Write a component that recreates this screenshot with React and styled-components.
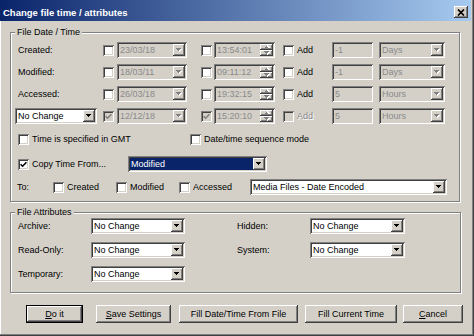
import React from 'react';
import styled, { createGlobalStyle, css } from 'styled-components';

const face = '#d4d0c8';
const shadow = '#808080';
const dark = '#404040';
const light = '#ffffff';
const greyText = '#8a8a8a';

const GlobalStyle = createGlobalStyle`
  html, body { margin: 0; padding: 0; background: ${face}; }
  body {
    font-family: "Liberation Sans", Arial, sans-serif;
    font-size: 9px;
    line-height: 11px;
    color: #000;
  }
  #root { width: 474px; height: 336px; }
`;

const raised = css`
  box-shadow: inset -1px -1px 0 ${dark}, inset 1px 1px 0 ${light},
    inset -2px -2px 0 ${shadow}, inset 2px 2px 0 ${face};
`;

const sunken = css`
  box-shadow: inset 1px 1px 0 ${shadow}, inset -1px -1px 0 ${light},
    inset 2px 2px 0 ${dark}, inset -2px -2px 0 ${face};
`;

const Window = styled.div`
  width: 474px;
  height: 336px;
  box-sizing: border-box;
  background: ${face};
  border-right: 1px solid ${dark};
  border-bottom: 1px solid ${dark};
  box-shadow: inset -1px -1px 0 ${shadow}, inset 1px 0 0 ${light};
  display: flex;
  flex-direction: column;
  overflow: hidden;
`;

const TitleBar = styled.div`
  flex: none;
  height: 21px;
  box-sizing: border-box;
  margin-right: 2px;
  padding: 3px 3px 0 3px;
  background: linear-gradient(to right, #0a246a, #a6caf0);
  display: flex;
  align-items: center;
  justify-content: space-between;
`;

const Title = styled.span`
  color: #fff;
  font-weight: bold;
  font-size: 9.5px;
`;

const CloseButton = styled.div`
  width: 14px;
  height: 12px;
  background: ${face};
  ${raised};
  display: flex;
  align-items: center;
  justify-content: center;
`;

const Body = styled.div`
  flex: 1;
  display: flex;
  flex-direction: column;
  padding: 0 0 0 10px;
`;

const Group = styled.div`
  position: relative;
  margin-top: ${p => p.$mt}px;
  margin-right: ${p => p.$mr}px;
  border: 1px solid ${shadow};
  box-shadow: inset 1px 1px 0 ${light}, 1px 1px 0 ${light};
  padding: ${p => p.$pad};
`;

const Caption = styled.span`
  position: absolute;
  top: -6px;
  left: 4px;
  padding: 0 2px;
  background: ${face};
  line-height: 11px;
`;

const DateGrid = styled.div`
  display: grid;
  grid-template-columns: 88px 14px 84px 13px 69px 49px 47px 66px;
  grid-auto-rows: 16px;
  row-gap: 6px;
  align-items: center;
`;

const RowLabel = styled.span`
  padding-left: 3px;
  white-space: nowrap;
`;

const Field = styled.div`
  box-sizing: border-box;
  width: ${p => p.$w}px;
  height: 16px;
  padding: 2px;
  display: flex;
  background: ${p => (p.$disabled ? face : '#fff')};
  color: ${p => (p.$disabled ? greyText : '#000')};
  ${sunken};
`;

const FieldText = styled.span`
  flex: 1;
  min-width: 0;
  padding-left: 1px;
  line-height: 12px;
  white-space: nowrap;
  overflow: hidden;
  ${p => p.$selected && css`
    background: #0a246a;
    color: #fff;
  `}
`;

const DropButton = styled.span`
  flex: none;
  width: 12px;
  height: 12px;
  background: ${face};
  ${raised};
  display: flex;
  align-items: center;
  justify-content: center;
`;

const SpinStack = styled.span`
  flex: none;
  width: 13px;
  display: flex;
  flex-direction: column;
`;

const SpinButton = styled.span`
  height: 6px;
  background: ${face};
  ${raised};
  display: flex;
  align-items: center;
  justify-content: center;
`;

const ArrowSvg = styled.svg`
  display: block;
  shape-rendering: crispEdges;
  ${p => p.$up && css`transform: scaleY(-1);`}
`;

const CheckWrap = styled.label`
  display: flex;
  align-items: center;
  gap: 3px;
  margin-left: ${p => p.$ml || 0}px;
  width: ${p => (p.$w ? `${p.$w}px` : 'auto')};
  flex: none;
  white-space: nowrap;
  color: ${p => (p.$disabled ? greyText : '#000')};
  ${p => p.$disabled && css`text-shadow: 1px 1px 0 ${light};`}
`;

const Box = styled.span`
  flex: none;
  width: 11px;
  height: 11px;
  box-sizing: border-box;
  background: ${p => (p.$disabled ? face : '#fff')};
  ${sunken};
  display: flex;
  align-items: center;
  justify-content: center;
`;

const OptionRow = styled.div`
  margin-top: ${p => p.$mt}px;
  height: ${p => p.$h}px;
  display: grid;
  grid-template-columns: ${p => p.$cols};
  align-items: center;
`;

const ToRow = styled.div`
  margin-top: 7px;
  height: 16px;
  display: flex;
  align-items: center;
`;

const ToLabel = styled.span`
  width: 38px;
  padding-left: 2px;
  box-sizing: border-box;
  flex: none;
`;

const AttrGrid = styled.div`
  display: grid;
  grid-template-columns: 76px 143px 76px 95px;
  grid-auto-rows: 16px;
  row-gap: 8px;
  align-items: center;
`;

const ButtonRow = styled.div`
  margin-top: 12px;
  padding-left: 16px;
  display: flex;
`;

const Button = styled.button`
  box-sizing: border-box;
  width: ${p => p.$w}px;
  height: 18px;
  margin-left: ${p => p.$ml || 0}px;
  padding: 0;
  border: none;
  background: ${face};
  font: inherit;
  color: #000;
  ${raised};
  ${p => p.$default && css`
    border: 1px solid #000;
  `}
  u { text-decoration: underline; }
`;

const Arrow = ({ disabled, up }) => (
  <ArrowSvg width="6" height="4" viewBox="0 0 6 4" $up={up}>
    {disabled && <path d="M1 1h5v1h-1v1h-1v1h-1v-1h-1v-1h-1z" fill={light} />}
    <path d="M0 0h5v1h-1v1h-1v1h-1v-1h-1v-1h-1z" fill={disabled ? shadow : '#000'} />
  </ArrowSvg>
);

const Combo = ({ w, value, disabled, selected }) => (
  <Field $w={w} $disabled={disabled}>
    <FieldText $selected={selected}>{value}</FieldText>
    <DropButton>
      <Arrow disabled={disabled} />
    </DropButton>
  </Field>
);

const Spin = ({ w, value, disabled }) => (
  <Field $w={w} $disabled={disabled}>
    <FieldText>{value}</FieldText>
    <SpinStack>
      <SpinButton><Arrow disabled={disabled} up /></SpinButton>
      <SpinButton><Arrow disabled={disabled} /></SpinButton>
    </SpinStack>
  </Field>
);

const Edit = ({ w, value, disabled }) => (
  <Field $w={w} $disabled={disabled}>
    <FieldText>{value}</FieldText>
  </Field>
);

const CheckBox = ({ label, checked, disabled, ml, w }) => (
  <CheckWrap $disabled={disabled} $ml={ml} $w={w}>
    <Box $disabled={disabled}>
      {checked && (
        <svg width="7" height="7" viewBox="0 0 7 7">
          <path d="M0.6 3.2 L2.6 5.2 L6.4 1.2" fill="none"
            stroke={disabled ? shadow : '#000'} strokeWidth="1.6" />
        </svg>
      )}
    </Box>
    {label && <span>{label}</span>}
  </CheckWrap>
);

const dateRows = [
  { label: 'Created:', date: '23/03/18', time: '13:54:01', num: '-1', unit: 'Days' },
  { label: 'Modified:', date: '18/03/11', time: '09:11:12', num: '-1', unit: 'Days' },
  { label: 'Accessed:', date: '26/03/18', time: '19:32:15', num: '5', unit: 'Hours' },
];

const attrRows = [
  ['Archive:', 'Hidden:'],
  ['Read-Only:', 'System:'],
  ['Temporary:', null],
];

export default function App() {
  return (
    <>
      <GlobalStyle />
      <Window>
        <TitleBar>
          <Title>Change file time / attributes</Title>
          <CloseButton>
            <svg width="8" height="7" viewBox="0 0 8 7">
              <path d="M1 0.5 L7 6.5 M7 0.5 L1 6.5" stroke="#000" strokeWidth="1.7" />
            </svg>
          </CloseButton>
        </TitleBar>
        <Body>
          <Group $mt={11} $mr={13} $pad="9px 0 6px 4px">
            <Caption>File Date / Time</Caption>
            <DateGrid>
              {dateRows.map(r => (
                <React.Fragment key={r.label}>
                  <RowLabel>{r.label}</RowLabel>
                  <CheckBox />
                  <Combo w={70} value={r.date} disabled />
                  <CheckBox />
                  <Spin w={61} value={r.time} disabled />
                  <CheckBox label="Add" />
                  <Edit w={41} value={r.num} disabled />
                  <Combo w={66} value={r.unit} disabled />
                </React.Fragment>
              ))}
              <Combo w={82} value="No Change" />
              <CheckBox checked disabled />
              <Combo w={70} value="12/12/18" disabled />
              <CheckBox checked disabled />
              <Spin w={61} value="15:20:10" disabled />
              <CheckBox label="Add" disabled />
              <Edit w={41} value="5" disabled />
              <Combo w={66} value="Hours" disabled />
            </DateGrid>
            <OptionRow $mt={8} $h={14} $cols="175px auto">
              <CheckBox label="Time is specified in GMT" ml={3} />
              <CheckBox label="Date/time sequence mode" />
            </OptionRow>
            <OptionRow $mt={10} $h={16} $cols="113px 139px">
              <CheckBox label="Copy Time From..." checked ml={3} />
              <Combo w={139} value="Modified" selected />
            </OptionRow>
            <ToRow>
              <ToLabel>To:</ToLabel>
              <CheckBox label="Created" w={63} />
              <CheckBox label="Modified" w={63} />
              <CheckBox label="Accessed" w={71} />
              <Combo w={197} value="Media Files - Date Encoded" />
            </ToRow>
          </Group>
          <Group $mt={10} $mr={12} $pad="5px 0 10px 4px">
            <Caption>File Attributes</Caption>
            <AttrGrid>
              {attrRows.map(([a, b]) => (
                <React.Fragment key={a}>
                  <RowLabel>{a}</RowLabel>
                  <Combo w={94} value="No Change" />
                  {b && <RowLabel>{b}</RowLabel>}
                  {b && <Combo w={95} value="No Change" />}
                </React.Fragment>
              ))}
            </AttrGrid>
          </Group>
          <ButtonRow>
            <Button $w={57} $default><u>D</u>o it</Button>
            <Button $w={75} $ml={13}><u>S</u>ave Settings</Button>
            <Button $w={119} $ml={8}>Fill Date/Time From File</Button>
            <Button $w={92} $ml={7}>Fill Current Time</Button>
            <Button $w={60} $ml={6}><u>C</u>ancel</Button>
          </ButtonRow>
        </Body>
      </Window>
    </>
  );
}
